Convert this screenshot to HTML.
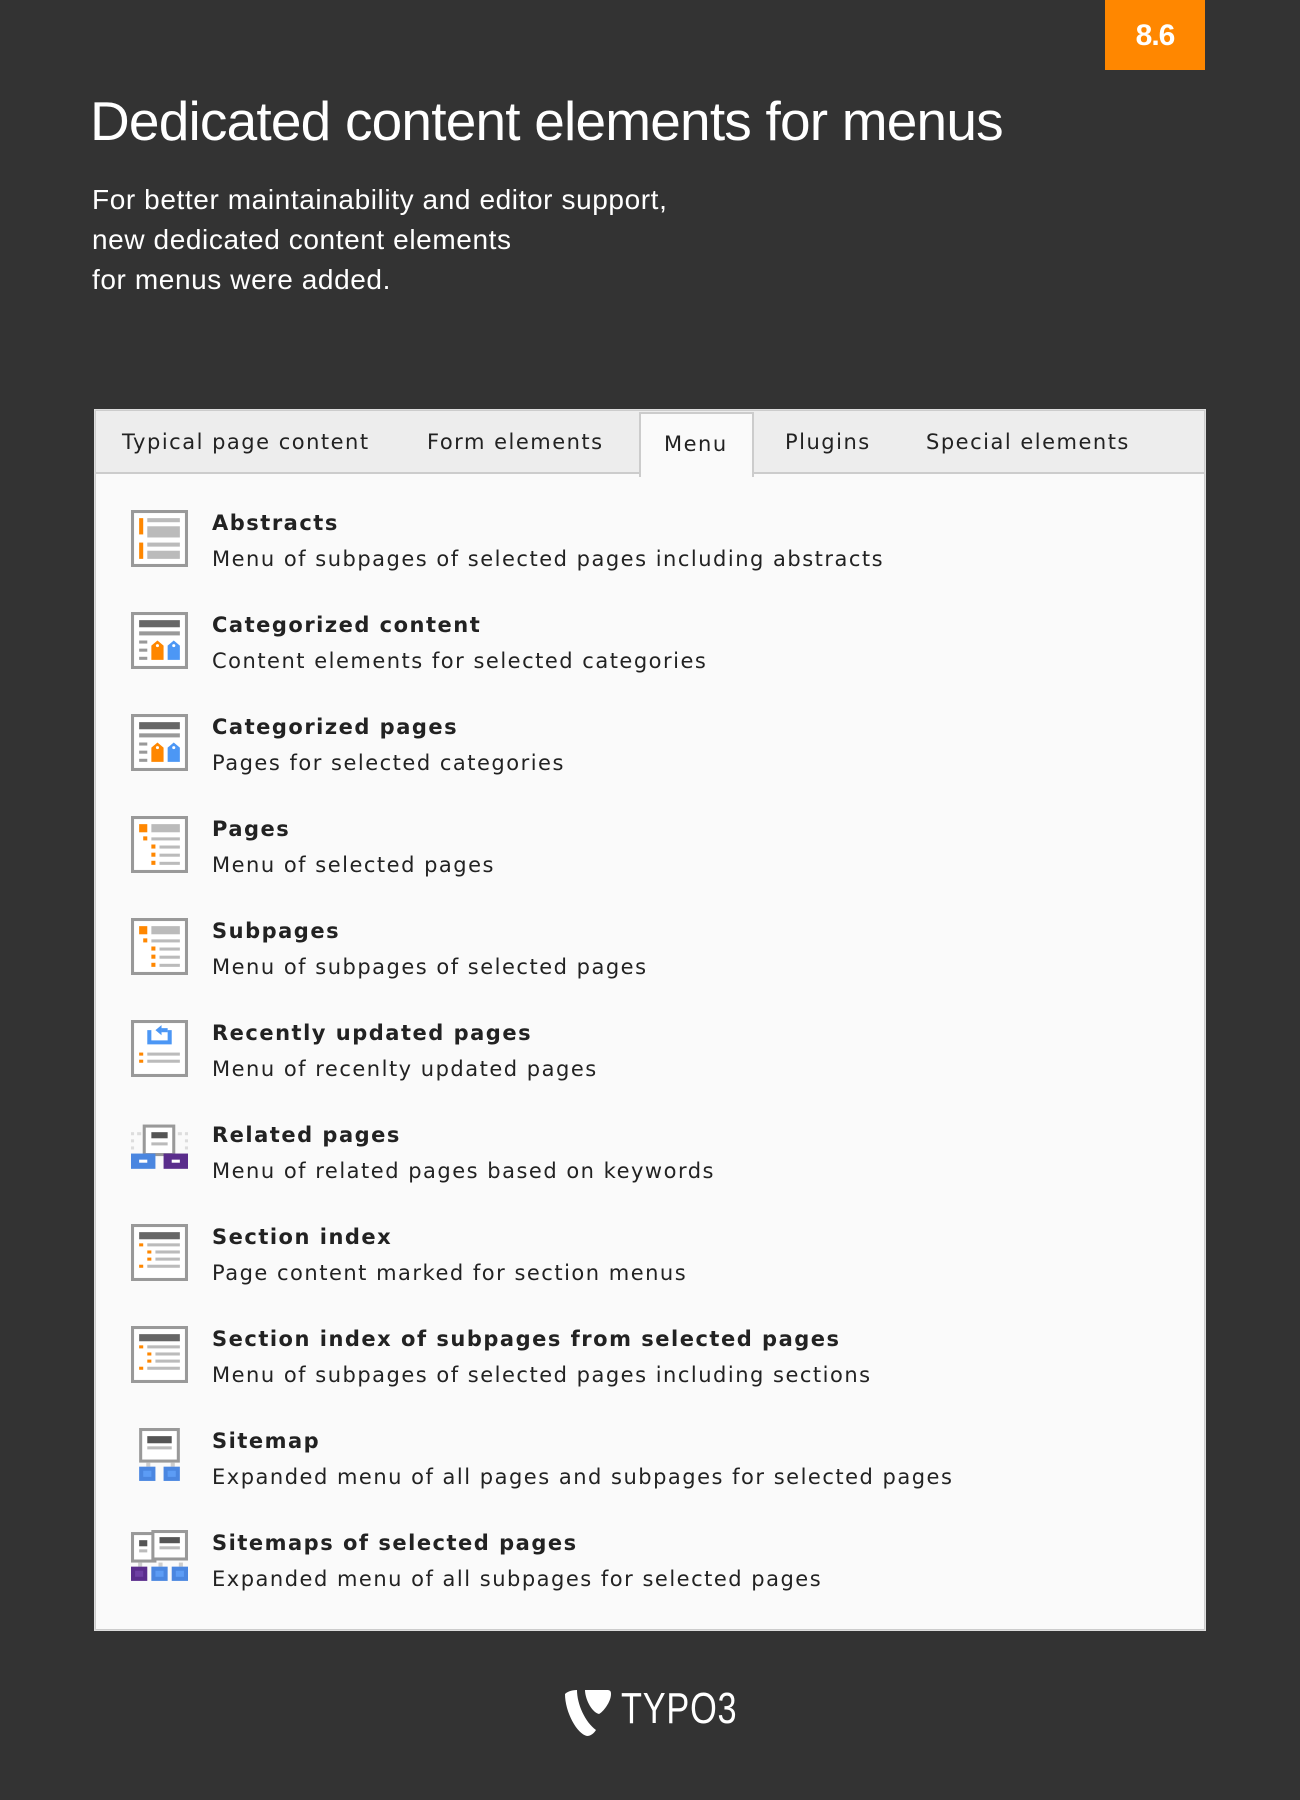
<!DOCTYPE html>
<html><head><meta charset="utf-8"><style>
*{margin:0;padding:0;box-sizing:border-box}
body{width:1300px;height:1800px;background:#333;position:relative;overflow:hidden;font-family:"DejaVu Sans",Verdana,sans-serif}
.badge{position:absolute;left:1105px;top:0;width:100px;height:70px;background:#ff8700;color:#fff;font:bold 30px "Liberation Sans",sans-serif;text-align:center;line-height:72px;letter-spacing:-1px}
h1{position:absolute;left:90px;top:86px;font:300 55px/70px "Liberation Sans",sans-serif;color:#fff;letter-spacing:-0.8px;white-space:nowrap}
.sub{position:absolute;left:92px;top:180px;font:300 28px/40px "Liberation Sans",sans-serif;color:#fff;letter-spacing:0.6px}
.panel{position:absolute;left:95px;top:410px;width:1110px;height:1220px;background:#fafafa;border:1px solid #ccc;box-shadow:0 0 0 1px #ddd}
.tabbar{position:absolute;left:0;top:0;width:1108px;height:63px;background:#ededed;border-bottom:2px solid #ccc}
.tab{position:absolute;top:0;height:63px;line-height:63px;font-size:21px;color:#222;white-space:nowrap;letter-spacing:1.5px}
.act{background:#fafafa;border:2px solid #ccc;border-bottom:none;height:65px;top:1px;line-height:60px}
.item{position:absolute;left:35px;height:70px}
.item svg{position:absolute;left:0;top:0}
.t{position:absolute;left:81px;top:0;font-weight:bold;font-size:21px;color:#222;white-space:nowrap;line-height:26px;letter-spacing:1.5px}
.d{position:absolute;left:81px;top:36px;font-size:21px;color:#222;white-space:nowrap;line-height:26px;letter-spacing:1.5px}
.logo{position:absolute;left:563px;top:1688px}
.logo span{position:absolute;left:58px;top:-4px;font:44px "Liberation Sans",sans-serif;color:#fff;letter-spacing:1px;transform:scaleX(0.78);transform-origin:left}
</style></head><body>
<div class="badge">8.6</div>
<h1>Dedicated content elements for menus</h1>
<div class="sub">For better maintainability and editor support,<br>new dedicated content elements<br>for menus were added.</div>
<div class="panel">
<div class="tabbar">
<div class="tab" style="left:26px">Typical page content</div>
<div class="tab" style="left:331px">Form elements</div>
<div class="tab act" style="left:543px;width:115px;padding-left:23px">Menu</div>
<div class="tab" style="left:689px">Plugins</div>
<div class="tab" style="left:830px">Special elements</div>
</div>

<div class="item" style="top:99px"><svg width="57" height="57" viewBox="0 0 56 56"><rect x="1.5" y="1.5" width="53" height="53" fill="#fff" stroke="#999" stroke-width="3"/><rect x="8" y="8" width="4" height="16" fill="#ff8700"/><rect x="8" y="32" width="4" height="16" fill="#ff8700"/><rect x="16" y="8" width="32" height="4" fill="#bbb"/><rect x="16" y="16" width="32" height="11" fill="#bbb"/><rect x="16" y="32" width="32" height="4" fill="#bbb"/><rect x="16" y="40" width="32" height="8" fill="#bbb"/></svg><div class="t">Abstracts</div><div class="d">Menu of subpages of selected pages including abstracts</div></div>

<div class="item" style="top:201px"><svg width="57" height="57" viewBox="0 0 56 56"><rect x="1.5" y="1.5" width="53" height="53" fill="#fff" stroke="#999" stroke-width="3"/><rect x="8" y="8" width="40" height="7" fill="#666"/><rect x="8" y="19" width="40" height="4" fill="#999"/><rect x="8" y="28" width="8" height="3" fill="#999"/><rect x="8" y="36" width="8" height="3" fill="#999"/><rect x="8" y="44" width="8" height="3" fill="#999"/><path d="M20 33l6-5 6 5v14h-12z" fill="#ff8700"/><path d="M36 33l6-5 6 5v14h-12z" fill="#4c97f5"/><circle cx="26" cy="33" r="1.5" fill="#fff"/><circle cx="42" cy="33" r="1.5" fill="#fff"/></svg><div class="t">Categorized content</div><div class="d">Content elements for selected categories</div></div>

<div class="item" style="top:303px"><svg width="57" height="57" viewBox="0 0 56 56"><rect x="1.5" y="1.5" width="53" height="53" fill="#fff" stroke="#999" stroke-width="3"/><rect x="8" y="8" width="40" height="7" fill="#666"/><rect x="8" y="19" width="40" height="4" fill="#999"/><rect x="8" y="28" width="8" height="3" fill="#999"/><rect x="8" y="36" width="8" height="3" fill="#999"/><rect x="8" y="44" width="8" height="3" fill="#999"/><path d="M20 33l6-5 6 5v14h-12z" fill="#ff8700"/><path d="M36 33l6-5 6 5v14h-12z" fill="#4c97f5"/><circle cx="26" cy="33" r="1.5" fill="#fff"/><circle cx="42" cy="33" r="1.5" fill="#fff"/></svg><div class="t">Categorized pages</div><div class="d">Pages for selected categories</div></div>

<div class="item" style="top:405px"><svg width="57" height="57" viewBox="0 0 56 56"><rect x="1.5" y="1.5" width="53" height="53" fill="#fff" stroke="#999" stroke-width="3"/><rect x="8" y="8" width="8" height="8" fill="#ff8700"/><rect x="20" y="8" width="28" height="8" fill="#bbb"/><rect x="12" y="20" width="4" height="4" fill="#ff8700"/><rect x="20" y="21" width="28" height="3" fill="#bbb"/><rect x="20" y="28" width="4" height="4" fill="#ff8700"/><rect x="28" y="29" width="20" height="3" fill="#bbb"/><rect x="20" y="36" width="4" height="4" fill="#ff8700"/><rect x="28" y="37" width="20" height="3" fill="#bbb"/><rect x="20" y="44" width="4" height="4" fill="#ff8700"/><rect x="28" y="45" width="20" height="3" fill="#bbb"/></svg><div class="t">Pages</div><div class="d">Menu of selected pages</div></div>

<div class="item" style="top:507px"><svg width="57" height="57" viewBox="0 0 56 56"><rect x="1.5" y="1.5" width="53" height="53" fill="#fff" stroke="#999" stroke-width="3"/><rect x="8" y="8" width="8" height="8" fill="#ff8700"/><rect x="20" y="8" width="28" height="8" fill="#bbb"/><rect x="12" y="20" width="4" height="4" fill="#ff8700"/><rect x="20" y="21" width="28" height="3" fill="#bbb"/><rect x="20" y="28" width="4" height="4" fill="#ff8700"/><rect x="28" y="29" width="20" height="3" fill="#bbb"/><rect x="20" y="36" width="4" height="4" fill="#ff8700"/><rect x="28" y="37" width="20" height="3" fill="#bbb"/><rect x="20" y="44" width="4" height="4" fill="#ff8700"/><rect x="28" y="45" width="20" height="3" fill="#bbb"/></svg><div class="t">Subpages</div><div class="d">Menu of subpages of selected pages</div></div>

<div class="item" style="top:609px"><svg width="57" height="57" viewBox="0 0 56 56"><rect x="1.5" y="1.5" width="53" height="53" fill="#fff" stroke="#999" stroke-width="3"/><path d="M16 10v14h24v-14h-4v10h-16v-10z" fill="#4c97f5"/><path d="M24 10l6-5v10z" fill="#4c97f5"/><rect x="30" y="8" width="6" height="4" fill="#4c97f5"/><rect x="8" y="32" width="4" height="3" fill="#ff8700"/><rect x="8" y="39" width="4" height="3" fill="#ff8700"/><rect x="16" y="32" width="32" height="3" fill="#bbb"/><rect x="16" y="39" width="32" height="3" fill="#bbb"/></svg><div class="t">Recently updated pages</div><div class="d">Menu of recenlty updated pages</div></div>

<div class="item" style="top:711px"><svg width="57" height="57" viewBox="0 0 56 56"><g fill="#ddd"><rect x="0" y="10" width="3" height="3"/><rect x="0" y="17" width="3" height="3"/><rect x="0" y="24" width="3" height="3"/><rect x="6" y="10" width="4" height="3"/><rect x="53" y="10" width="3" height="3"/><rect x="53" y="17" width="3" height="3"/><rect x="53" y="24" width="3" height="3"/><rect x="46" y="10" width="4" height="3"/></g><rect x="13" y="4" width="29" height="28" fill="#fff" stroke="#999" stroke-width="3"/><rect x="20" y="10" width="16" height="6" fill="#555"/><rect x="20" y="20" width="16" height="3" fill="#bbb"/><rect x="0" y="31" width="24" height="15" fill="#4a86e0"/><rect x="8" y="37" width="8" height="3" fill="#fff"/><rect x="32" y="31" width="24" height="15" fill="#5a2d8c"/><rect x="40" y="37" width="8" height="3" fill="#fff"/></svg><div class="t">Related pages</div><div class="d">Menu of related pages based on keywords</div></div>

<div class="item" style="top:813px"><svg width="57" height="57" viewBox="0 0 56 56"><rect x="1.5" y="1.5" width="53" height="53" fill="#fff" stroke="#999" stroke-width="3"/><rect x="8" y="8" width="40" height="7" fill="#666"/><rect x="8" y="19" width="4" height="3" fill="#ff8700"/><rect x="16" y="19" width="32" height="3" fill="#bbb"/><rect x="16" y="26" width="4" height="3" fill="#ff8700"/><rect x="24" y="26" width="24" height="3" fill="#bbb"/><rect x="16" y="33" width="4" height="3" fill="#ff8700"/><rect x="24" y="33" width="24" height="3" fill="#bbb"/><rect x="8" y="40" width="4" height="3" fill="#ff8700"/><rect x="16" y="40" width="32" height="3" fill="#bbb"/></svg><div class="t">Section index</div><div class="d">Page content marked for section menus</div></div>

<div class="item" style="top:915px"><svg width="57" height="57" viewBox="0 0 56 56"><rect x="1.5" y="1.5" width="53" height="53" fill="#fff" stroke="#999" stroke-width="3"/><rect x="8" y="8" width="40" height="7" fill="#666"/><rect x="8" y="19" width="4" height="3" fill="#ff8700"/><rect x="16" y="19" width="32" height="3" fill="#bbb"/><rect x="16" y="26" width="4" height="3" fill="#ff8700"/><rect x="24" y="26" width="24" height="3" fill="#bbb"/><rect x="16" y="33" width="4" height="3" fill="#ff8700"/><rect x="24" y="33" width="24" height="3" fill="#bbb"/><rect x="8" y="40" width="4" height="3" fill="#ff8700"/><rect x="16" y="40" width="32" height="3" fill="#bbb"/></svg><div class="t">Section index of subpages from selected pages</div><div class="d">Menu of subpages of selected pages including sections</div></div>

<div class="item" style="top:1017px"><svg width="57" height="57" viewBox="0 0 56 56"><rect x="9.5" y="1.5" width="37" height="31" fill="#fff" stroke="#999" stroke-width="3"/><rect x="16" y="8" width="24" height="7" fill="#555"/><rect x="16" y="18" width="24" height="3" fill="#bbb"/><rect x="15" y="34" width="4" height="4" fill="#ccc"/><rect x="39" y="34" width="4" height="4" fill="#ccc"/><rect x="8" y="38" width="16" height="14" fill="#4a86e0"/><rect x="12" y="42" width="8" height="6" fill="#5c9cf5"/><rect x="32" y="38" width="16" height="14" fill="#4a86e0"/><rect x="36" y="42" width="8" height="6" fill="#5c9cf5"/></svg><div class="t">Sitemap</div><div class="d">Expanded menu of all pages and subpages for selected pages</div></div>

<div class="item" style="top:1119px"><svg width="57" height="57" viewBox="0 0 56 56"><rect x="1.5" y="3.5" width="22" height="27" fill="#fff" stroke="#999" stroke-width="3"/><rect x="8" y="10" width="8" height="6" fill="#555"/><rect x="8" y="19" width="8" height="3" fill="#bbb"/><rect x="21.5" y="1.5" width="33" height="27" fill="#fff" stroke="#999" stroke-width="3"/><rect x="28" y="7" width="20" height="6" fill="#555"/><rect x="28" y="16" width="20" height="3" fill="#bbb"/><rect x="7" y="32" width="4" height="4" fill="#ccc"/><rect x="27" y="32" width="4" height="4" fill="#ccc"/><rect x="47" y="32" width="4" height="4" fill="#ccc"/><rect x="0" y="36" width="16" height="14" fill="#5a2d8c"/><rect x="4" y="40" width="8" height="6" fill="#6e3fa3"/><rect x="20" y="36" width="16" height="14" fill="#4a86e0"/><rect x="24" y="40" width="8" height="6" fill="#5c9cf5"/><rect x="40" y="36" width="16" height="14" fill="#4a86e0"/><rect x="44" y="40" width="8" height="6" fill="#5c9cf5"/></svg><div class="t">Sitemaps of selected pages</div><div class="d">Expanded menu of all subpages for selected pages</div></div>
</div>

<div class="logo"><svg width="52" height="50" viewBox="0 0 52 50"><path d="M2 6C2 24 14 46 24 48c4 0 7-3 9-6C22 34 14 16 14 2 8 2 4 4 2 6z" fill="#fff"/><path d="M22 2c0 8 6 22 14 24 4-2 12-12 12-20 0-3-1-4-4-4z" fill="#fff"/></svg><span>TYPO3</span></div>
</body></html>
